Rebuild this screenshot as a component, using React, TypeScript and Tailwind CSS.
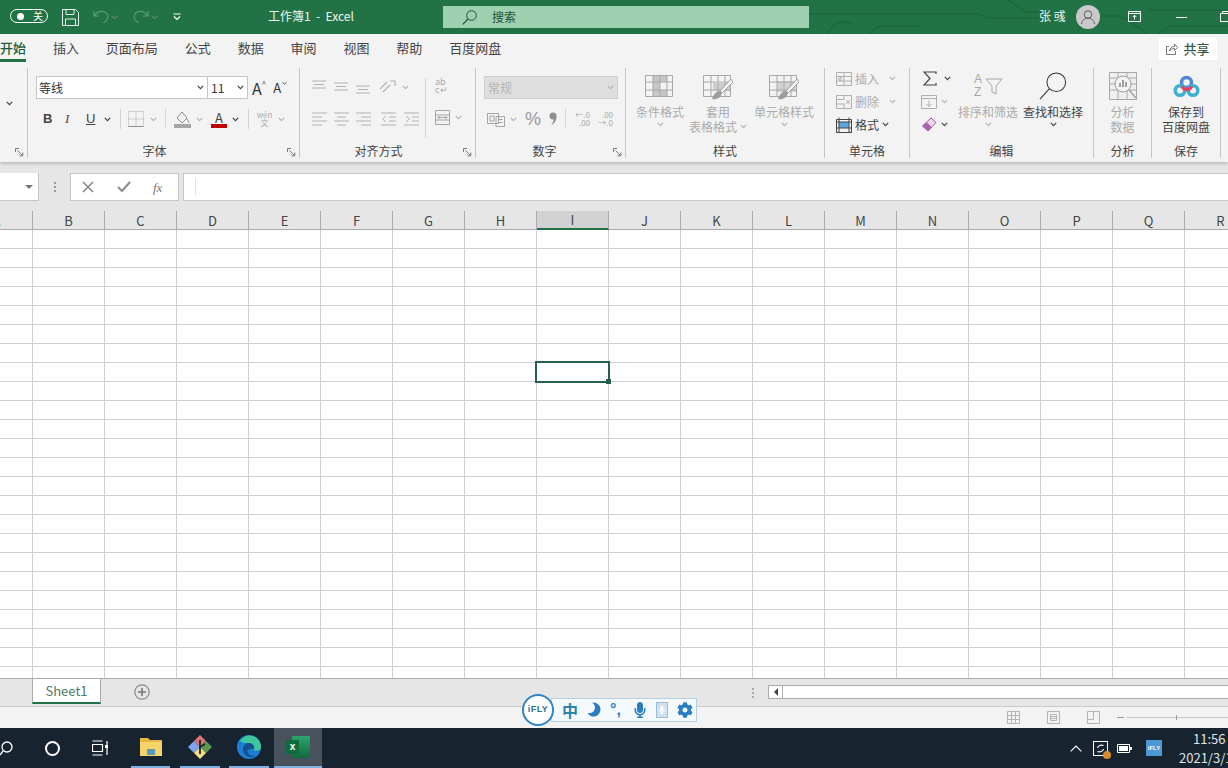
import type { ReactNode } from "react";
import { FaCog, FaMicrophone, FaMoon } from "react-icons/fa";

// ── Shared bits ────────────────────────────────────────

const COLS = ["A", "B", "C", "D", "E", "F", "G", "H", "I", "J", "K", "L", "M", "N", "O", "P", "Q", "R"];
const ROWS = Array.from({ length: 24 }, (_, i) => i);
const TABS = ["开始", "插入", "页面布局", "公式", "数据", "审阅", "视图", "帮助", "百度网盘"];

function Chev({ off, className = "" }: { off?: boolean; className?: string }) {
  return (
    <svg width="7" height="5" viewBox="0 0 7 5" className={`shrink-0 ${className}`}>
      <path d="M.8.8 3.500 3.600 6.200.8" fill="none" stroke={off ? "#b4b4b4" : "#444"} strokeWidth="1.200" />
    </svg>
  );
}

function Launcher({ className = "" }: { className?: string }) {
  return (
    <svg width="9" height="9" viewBox="0 0 9 9" className={className}>
      <path d="M.5 4V.5H4M2.500 2.500 7.500 7.500M7.800 4.500V7.800H4.500" fill="none" stroke="#777" strokeWidth="1" />
    </svg>
  );
}

function Lines({ kind, off = true }: { kind: number; off?: boolean }) {
  // 0-2 顶端/居中/底端，3-5 左/中/右
  const c = off ? "#b2b2b2" : "#555";
  const rows: Record<number, string> = {
    0: "M1 2h14M3 5.500h10M1 9h14",
    1: "M1 4h14M3 7.500h10M1 11h14",
    2: "M1 7h14M3 10.500h10M1 14h14",
    3: "M1 2h15M1 6h10M1 10h15M1 14h10",
    4: "M1 2h15M4 6h9M1 10h15M4 14h9",
    5: "M1 2h15M6 6h10M1 10h15M6 14h10",
  };
  return (
    <svg width="17" height="16" viewBox="0 0 17 16">
      <path d={rows[kind]} fill="none" stroke={c} strokeWidth="1" />
    </svg>
  );
}

function Group({
  width,
  label,
  launcher,
  pad,
  children,
}: {
  width: number;
  label?: string;
  launcher?: boolean;
  pad?: boolean;
  children: ReactNode;
}) {
  return (
    <div className="flex h-[90px] shrink-0 flex-col border-r border-[#c6c6c6]" style={{ width }}>
      <div className="h-[75px] shrink-0">{children}</div>
      <div className="flex h-[15px] items-center">
        <span className={`flex-1 text-center text-[12px] leading-none text-[#444] ${pad ? "pr-[6px]" : ""}`}>{label}</span>
        {launcher && <Launcher className="mr-[3px] mt-[4px]" />}
      </div>
    </div>
  );
}

function BigText({ lines, off, chev }: { lines: string[]; off?: boolean; chev?: boolean }) {
  return (
    <div className={`mt-[3px] flex flex-col items-center text-[12px] leading-[15px] ${off ? "text-[#ababab]" : "text-[#444]"}`}>
      {lines.map((l) => (
        <span key={l} className="whitespace-nowrap">{l}</span>
      ))}
      {chev && <Chev off={off} className="mt-[3px]" />}
    </div>
  );
}

// ── Title bar ──────────────────────────────────────────

function TitleBar() {
  return (
    <div className="relative flex h-[34px] shrink-0 items-center overflow-hidden bg-[#217346] text-white [&>*]:shrink-0">
      <svg width="420" height="34" viewBox="0 0 420 34" className="absolute left-[808px] top-0">
        <path
          d="M0 14h170l10 4h60M20 34c4-12 14-14 24-10M60 34l12-8h40M270 34c0-14 30-24 50-14l20 14M340 10h80M350 34l12-8h58M200 0l18 12h30"
          fill="none"
          stroke="#1c6a3e"
          strokeWidth="2"
        />
      </svg>
      <div className="relative mb-[2px] ml-[10px] flex h-[14px] w-[38px] items-center justify-between rounded-full border border-white pl-[6px] pr-[4px]">
        <span className="h-[7px] w-[7px] rounded-full bg-white" />
        <span className="text-[10px] leading-none">关</span>
      </div>
      <svg width="17" height="17" viewBox="0 0 17 17" className="relative ml-[14px]">
        <path d="M.5.500h13l3 3v13H.5zM4 .5v5h8v-5M3.500 16.500V10h10v6.500" fill="none" stroke="#e8f2ec" strokeWidth="1" />
      </svg>
      <svg width="16" height="14" viewBox="0 0 16 14" className="relative ml-[14px]">
        <path d="M1 1v5h5M1.500 6C4 1 12-1 14.500 5c1.200 3.500-1 6-4 8" fill="none" stroke="#5a9a77" strokeWidth="1.200" />
      </svg>
      <Chev off className="relative ml-[2px] opacity-40" />
      <svg width="16" height="14" viewBox="0 0 16 14" className="relative ml-[15px]">
        <path d="M15 1v5h-5M14.500 6C12 1 4-1 1.500 5c-1.200 3.500 1 6 4 8" fill="none" stroke="#5a9a77" strokeWidth="1.200" />
      </svg>
      <Chev off className="relative ml-[2px] opacity-40" />
      <svg width="8" height="8" viewBox="0 0 8 8" className="relative ml-[15px]">
        <path d="M.5 1h7M1 3.500 4 6.500 7 3.500" fill="none" stroke="#fff" strokeWidth="1.200" />
      </svg>
      <span className="relative mb-[3px] ml-[87px] w-[175px] whitespace-pre text-[12px] text-[#f1f7f3]">工作簿1  -  Excel</span>
      <div className="relative flex h-[22px] w-[366px] items-center bg-[#9fd0b0] pl-[19px] text-[12px] text-[#1f5236]">
        <svg width="15" height="15" viewBox="0 0 15 15">
          <circle cx="9.500" cy="5.500" r="4.800" fill="none" stroke="#1f5236" strokeWidth="1" />
          <path d="M6 9 .8 14.300" stroke="#1f5236" strokeWidth="1.200" />
        </svg>
        <span className="ml-[15px]">搜索</span>
      </div>
      <span className="relative mb-[3px] ml-[230px] whitespace-pre text-[12px] text-[#eef6f1]">张 彧</span>
      <div className="relative ml-[10px] flex h-[24px] w-[24px] items-center justify-center rounded-full bg-[#c9c9c9]">
        <svg width="16" height="16" viewBox="0 0 16 16">
          <circle cx="8" cy="5.500" r="3.800" fill="none" stroke="#5c5c5c" strokeWidth="1" />
          <path d="M1.500 15c.5-4 3-5.800 6.500-5.800s6 1.800 6.500 5.800" fill="none" stroke="#5c5c5c" strokeWidth="1" />
        </svg>
      </div>
      <svg width="13" height="11" viewBox="0 0 13 11" className="relative mb-[2px] ml-[28px]">
        <path d="M.5.500h12v10H.5zM.5 2.500h12M6.500 8.500V4.500M4.700 6 6.500 4.200 8.300 6" fill="none" stroke="#fff" strokeWidth="1" />
      </svg>
      <span className="relative ml-[35px] h-px w-[11px] bg-white" />
      <svg width="12" height="11" viewBox="0 0 12 11" className="relative mb-[2px] ml-[33px]">
        <path d="M.5 2.500h8v8h-8zM2.500 2.500v-2h8v8h-2" fill="none" stroke="#fff" strokeWidth="1" />
      </svg>
    </div>
  );
}

// ── Tabs ───────────────────────────────────────────────

function TabRow() {
  return (
    <div className="flex h-[28px] shrink-0 items-stretch bg-[#f3f3f3]">
      <div className="flex flex-1 gap-[26.900px] pt-[6px] text-[13px] leading-[16px] text-[#444]">
        {TABS.map((t, i) => (
          <div key={t} className={i === 0 ? "h-[22px] border-b-[3px] border-[#217346] font-medium text-[#1f5c3b]" : ""}>
            {t}
          </div>
        ))}
      </div>
      <div className="mr-[11px] mt-[4px] flex h-[22px] w-[58px] items-center justify-center gap-[5px] bg-white text-[13px] font-medium text-[#3d5a4a]">
        <svg width="12" height="12" viewBox="0 0 12 12">
          <path d="M3 3.500H.5v8h9V8M3.500 8c.3-3 2.500-4.500 5-4.500V1l3 3.500-3 3V5.500C6 5.500 4.500 6.500 3.500 8z" fill="none" stroke="#666" strokeWidth=".9" />
        </svg>
        共享
      </div>
    </div>
  );
}

// ── Ribbon groups ──────────────────────────────────────

function FontGroup() {
  return (
    <div className="pl-[8px] pt-[8px]">
      <div className="flex h-[23px] items-center text-[12px] text-[#333]">
        <div className="flex h-full w-[172px] items-center justify-between border border-[#c6c6c6] bg-white pl-[2px] pr-[3px]">
          等线
          <Chev />
        </div>
        <div className="flex h-full w-[40px] items-center justify-between border border-l-0 border-[#c6c6c6] bg-white pl-[3px] pr-[3px]">
          11
          <Chev />
        </div>
        <span className="ml-[4px] text-[16px] leading-none">A</span>
        <span className="mb-[8px] text-[8px] leading-none text-[#555]">^</span>
        <span className="ml-[7px] text-[13px] leading-none">A</span>
        <Chev className="mb-[9px] scale-75" />
      </div>
      <div className="mt-[10px] flex h-[20px] items-center text-[13px] text-[#444]">
        <span className="ml-[7px] w-[10px] font-['Liberation_Sans',sans-serif] font-bold">B</span>
        <span className="ml-[12px] w-[8px] font-['Liberation_Serif',serif] italic">I</span>
        <span className="ml-[13px] w-[10px] font-['Liberation_Sans',sans-serif] underline">U</span>
        <Chev className="ml-[8px]" />
        <span className="ml-[9px] mr-[7px] h-[20px] w-px bg-[#d4d4d4]" />
        <svg width="16" height="16" viewBox="0 0 16 16">
          <path d="M.5 15.500h15" stroke="#777" strokeWidth="1" />
          <path d="M.5.500h15v15H.5zM8 .5v15M.5 8h15" fill="none" stroke="#aaa" strokeWidth="1" strokeDasharray="1 1" />
        </svg>
        <Chev off className="ml-[6px]" />
        <span className="ml-[8px] mr-[8px] h-[20px] w-px bg-[#d4d4d4]" />
        <svg width="17" height="17" viewBox="0 0 17 17">
          <path d="M8 1 3 7l5 5 5-5zM13 8c1 2 2 3 2 4" fill="none" stroke="#8a8a8a" strokeWidth="1" />
          <rect x="0" y="13" width="17" height="4" fill="#a5a5a5" />
        </svg>
        <Chev off className="ml-[5px]" />
        <div className="ml-[8px] flex w-[16px] flex-col items-center text-[13px] leading-[13px]">
          A
          <span className="h-[4px] w-full bg-[#c00000]" />
        </div>
        <Chev className="ml-[5px]" />
        <span className="ml-[9px] mr-[7px] h-[20px] w-px bg-[#d4d4d4]" />
        <div className="flex w-[17px] flex-col items-center text-[8px] leading-[8px] text-[#aaa]">
          <span>wén</span>
          <span>文</span>
        </div>
        <Chev off className="ml-[5px]" />
      </div>
    </div>
  );
}

function AlignGroup() {
  return (
    <div className="flex pl-[11px] pt-[10px]">
      <div className="w-[114px]">
        <div className="flex h-[18px] items-center gap-[5px]">
          <Lines kind={0} />
          <Lines kind={1} />
          <Lines kind={2} />
          <svg width="18" height="16" viewBox="0 0 18 16" className="ml-[2px]">
            <path d="M1 10 8 3M4 13l7-7M11 2h5v5" fill="none" stroke="#b2b2b2" strokeWidth="1.200" />
          </svg>
          <Chev off />
        </div>
        <div className="mt-[14px] flex h-[18px] items-center gap-[5px]">
          <Lines kind={3} />
          <Lines kind={4} />
          <Lines kind={5} />
          <svg width="15" height="14" viewBox="0 0 15 14" className="ml-[4px]">
            <path d="M0 1h15M8 5h7M8 9h7M0 13h15M5 4 1.500 7 5 10" fill="none" stroke="#b2b2b2" />
          </svg>
          <svg width="15" height="14" viewBox="0 0 15 14" className="ml-[3px]">
            <path d="M0 1h15M8 5h7M8 9h7M0 13h15M2 4l3.500 3L2 10" fill="none" stroke="#b2b2b2" />
          </svg>
        </div>
      </div>
      <span className="h-[60px] w-px bg-[#d4d4d4]" />
      <div className="ml-[9px]">
        <div className="flex h-[18px] flex-col items-start text-[9px] leading-[8px] text-[#aaa]">
          <span>ab</span>
          <span>c↵</span>
        </div>
        <div className="mt-[14px] flex items-center gap-[5px]">
          <svg width="15" height="15" viewBox="0 0 15 15">
            <path d="M.5.500h14v14H.5zM.5 5h14M.5 10h14M3 7.500h9M4.500 6 3 7.500 4.500 9M10.500 6 12 7.500 10.500 9" fill="none" stroke="#a5a5a5" />
          </svg>
          <Chev off />
        </div>
      </div>
    </div>
  );
}

function NumberGroup() {
  return (
    <div className="pl-[8px] pt-[8px]">
      <div className="flex h-[23px] w-[134px] items-center justify-between border border-[#cfcfcf] bg-[#dedede] pl-[3px] pr-[3px] text-[12px] text-[#b4b4b4]">
        常规
        <Chev off />
      </div>
      <div className="mt-[10px] flex h-[20px] items-center text-[#a8a8a8]">
        <svg width="18" height="15" viewBox="0 0 18 15" className="ml-[3px]">
          <path d="M.5 1.500h11v10H.5zM9 4.500h8.500v10H9zM3 4h4v5H3zM11.500 7.500h4M11.500 10.500h4" fill="none" stroke="#a5a5a5" />
        </svg>
        <Chev off className="ml-[5px]" />
        <span className="ml-[8px] font-['Liberation_Sans',sans-serif] text-[18px] leading-none text-[#9a9a9a]">%</span>
        <svg width="8" height="14" viewBox="0 0 8 14" className="ml-[8px]">
          <circle cx="4" cy="4" r="3.500" fill="#8f8f8f" />
          <path d="M7.500 4C7.500 9 5 12 2 13.500 4 11 4.500 9 4.500 7z" fill="#8f8f8f" />
        </svg>
        <span className="ml-[8px] mr-[7px] h-[20px] w-px bg-[#d4d4d4]" />
        <div className="w-[17px] text-right text-[8px] leading-[8px]">
          ←.0
          <br />
          .00
        </div>
        <div className="ml-[6px] w-[17px] text-right text-[8px] leading-[8px]">
          .00
          <br />
          →.0
        </div>
      </div>
    </div>
  );
}

function StyleIcon({ kind }: { kind: number }) {
  return (
    <svg width="30" height="26" viewBox="0 0 30 26" className="shrink-0">
      {kind === 0 && <path d="M8 .5h14V7H15v8h7v7H8z" fill="#c6c6c6" />}
      {kind === 1 && <path d="M10 8h18v8H10z" fill="#cdcdcd" />}
      {kind === 2 && <path d="M8 6h20v11H8z" fill="#d2d2d2" />}
      <path d="M.5.500h27v21H.5zM.5 7h27M.5 15h27M8 .5v21M15 .5v21M22 .5v21" fill="none" stroke="#a8a8a8" strokeWidth="1" />
      {kind !== 0 && (
        <>
          <path d="M28 4 17 16l2 2L30 7z" fill="#f3f3f3" stroke="#a0a0a0" strokeWidth="1" />
          <path d="M17 16c-4 0-6 3-8 8 4 1 9-1 10-6z" fill="#9c9c9c" />
        </>
      )}
    </svg>
  );
}

function StylesGroup() {
  return (
    <div className="flex pl-[10px] pt-[7px]">
      <div className="flex w-[48px] flex-col items-center">
        <StyleIcon kind={0} />
        <BigText lines={["条件格式"]} off chev />
      </div>
      <div className="ml-[4px] flex w-[60px] flex-col items-center">
        <StyleIcon kind={1} />
        <div className="mt-[3px] flex flex-col items-center text-[12px] leading-[15px] text-[#ababab]">
          <span>套用</span>
          <span className="flex items-center gap-[3px] whitespace-nowrap">
            表格格式
            <Chev off />
          </span>
        </div>
      </div>
      <div className="ml-[6px] flex w-[60px] flex-col items-center">
        <StyleIcon kind={2} />
        <BigText lines={["单元格样式"]} off chev />
      </div>
    </div>
  );
}

function CellRow({ children, text, off }: { children: ReactNode; text: string; off?: boolean }) {
  return (
    <div className={`flex h-[23px] items-center text-[12px] ${off ? "text-[#ababab]" : "text-[#444]"}`}>
      {children}
      <span className="ml-[3px]">{text}</span>
      <Chev off={off} className={off ? "ml-[10px]" : "ml-[3px]"} />
    </div>
  );
}

function CellsGroup() {
  return (
    <div className="mt-[-1px] pl-[11px]">
      <CellRow text="插入" off>
        <svg width="16" height="14" viewBox="0 0 16 14">
          <path d="M.5.500h15v13H.5zM8 .5v13M.5 4.500h15M.5 9h15M2 7l3-2v4z" fill="none" stroke="#b0b0b0" />
        </svg>
      </CellRow>
      <CellRow text="删除" off>
        <svg width="16" height="14" viewBox="0 0 16 14">
          <path d="M.5.500h15v13H.5zM.5 4.500h8M.5 9h8M8 .5v4M8 9v4.500M10 5l4 4M14 5l-4 4" fill="none" stroke="#b0b0b0" />
        </svg>
      </CellRow>
      <CellRow text="格式">
        <svg width="16" height="16" viewBox="0 0 16 16">
          <rect x="3" y="5" width="10" height="6" fill="#5aa7e0" />
          <path d="M.5 2.500h15v13H.5zM.5 5h15M.5 11h15M3 .5v15M13 .5v15" fill="none" stroke="#444" />
        </svg>
      </CellRow>
    </div>
  );
}

function EditGroup() {
  return (
    <div className="mt-[-1px] flex pl-[11px]">
      <div className="w-[36px]">
        <div className="flex h-[23px] items-center gap-[7px] pl-[2px]">
          <svg width="14" height="15" viewBox="0 0 14 15">
            <path d="M13 3V1H1l6 6.500L1 14h12v-2" fill="none" stroke="#444" strokeWidth="1.200" />
          </svg>
          <Chev />
        </div>
        <div className="flex h-[23px] items-center gap-[4px]">
          <svg width="16" height="14" viewBox="0 0 16 14">
            <path d="M.5.500h15v13H.5zM.5 3.500h15M8 5.500v6M5.500 9 8 11.500 10.500 9" fill="none" stroke="#b0b0b0" />
          </svg>
          <Chev off />
        </div>
        <div className="flex h-[23px] items-center gap-[4px]">
          <svg width="16" height="15" viewBox="0 0 16 15">
            <path d="M10 1 15 5.500 7 14 1.500 9z" fill="#f1d6f1" stroke="#9b5aa0" strokeWidth="1" />
            <path d="M5.500 5 11 10.500 7 14 1.500 9z" fill="#a566aa" />
          </svg>
          <Chev />
        </div>
      </div>
      <div className="ml-[1px] flex w-[60px] flex-col items-center">
        <svg width="30" height="25" viewBox="0 0 30 25" className="mt-[5px] shrink-0">
          <text x="1" y="11" fontSize="12" fill="#a8a8a8" fontFamily="Liberation Sans">A</text>
          <text x="1" y="24" fontSize="12" fill="#a8a8a8" fontFamily="Liberation Sans">Z</text>
          <path d="M13 7h16l-6 7v8l-4-2v-6z" fill="none" stroke="#a8a8a8" />
        </svg>
        <div className="mt-[4px]">
          <BigText lines={["排序和筛选"]} off chev />
        </div>
      </div>
      <div className="ml-[5px] flex w-[60px] flex-col items-center">
        <svg width="28" height="28" viewBox="0 0 30 30" className="mt-[5px] shrink-0">
          <circle cx="18.500" cy="11" r="10" fill="none" stroke="#333" strokeWidth="1.100" />
          <path d="M11 18 1 29" stroke="#333" strokeWidth="1.100" />
        </svg>
        <div className="mt-[1px]">
          <BigText lines={["查找和选择"]} chev />
        </div>
      </div>
    </div>
  );
}

function AnalysisGroup() {
  return (
    <div className="flex flex-col items-center pt-[4px]">
      <svg width="28" height="28" viewBox="0 0 28 28" className="shrink-0">
        <path d="M.5.500h27v27H.5zM.5 6h27M.5 12h27M.5 18h27M9 .5v27M18 .5v27" fill="#efefef" stroke="#a8a8a8" />
        <circle cx="14" cy="12" r="8" fill="#f3f3f3" stroke="#a0a0a0" />
        <path d="M11 15v-4M14 15V8M17 15v-5" stroke="#a0a0a0" strokeWidth="2" />
        <path d="M20 18l7 8" stroke="#a0a0a0" strokeWidth="1.500" />
      </svg>
      <div className="mt-[1px]">
        <BigText lines={["分析", "数据"]} off />
      </div>
    </div>
  );
}

function SaveGroup() {
  return (
    <div className="flex flex-col items-center pt-[7px]">
      <svg width="27" height="24" viewBox="0 0 27 24" className="shrink-0">
        <circle cx="13.500" cy="7.500" r="5" fill="none" stroke="#4f86d6" strokeWidth="3.500" />
        <circle cx="7" cy="15.500" r="4.800" fill="none" stroke="#3fb0cf" strokeWidth="3.500" />
        <circle cx="20" cy="15.500" r="4.800" fill="none" stroke="#3fb0cf" strokeWidth="3.500" />
        <path d="M9 11.500c2 3.500 7 4.500 9.500 0" fill="none" stroke="#e0435f" strokeWidth="3.500" />
      </svg>
      <div className="mt-[2px]">
        <BigText lines={["保存到", "百度网盘"]} />
      </div>
    </div>
  );
}

function Ribbon() {
  return (
    <div className="relative z-10 flex h-[100px] shrink-0 bg-[#f3f3f3] pt-[6px] shadow-[0_2px_3px_rgba(0,0,0,0.18)]">
      <Group width={28} launcher>
        <div className="pl-[6px] pt-[33px]">
          <Chev />
        </div>
      </Group>
      <Group width={272} label="字体" launcher pad>
        <FontGroup />
      </Group>
      <Group width={176} label="对齐方式" launcher pad>
        <AlignGroup />
      </Group>
      <Group width={150} label="数字" launcher>
        <NumberGroup />
      </Group>
      <Group width={199} label="样式">
        <StylesGroup />
      </Group>
      <Group width={85} label="单元格">
        <CellsGroup />
      </Group>
      <Group width={184} label="编辑">
        <EditGroup />
      </Group>
      <Group width={58} label="分析">
        <AnalysisGroup />
      </Group>
      <Group width={69} label="保存">
        <SaveGroup />
      </Group>
    </div>
  );
}

// ── Formula bar + sheet ────────────────────────────────

function FormulaBar() {
  return (
    <div className="flex h-[49px] shrink-0 items-start bg-[#e6e6e6] pt-[11px]">
      <div className="flex h-[28px] w-[39px] items-center justify-end border-b border-r border-[#c6c6c6] bg-white pr-[5px]">
        <span className="h-0 w-0 border-x-[4px] border-t-[4px] border-x-transparent border-t-[#777]" />
      </div>
      <div className="ml-[14px] flex h-[28px] w-[3px] flex-col items-center justify-center gap-[2px]">
        <span className="h-[2px] w-[2px] bg-[#999]" />
        <span className="h-[2px] w-[2px] bg-[#999]" />
        <span className="h-[2px] w-[2px] bg-[#999]" />
      </div>
      <div className="ml-[14px] flex h-[28px] w-[109px] items-center border border-[#c6c6c6] bg-white pl-[11px]">
        <svg width="12" height="12" viewBox="0 0 12 12">
          <path d="M1 1l10 10M11 1 1 11" stroke="#8a8a8a" strokeWidth="1.600" />
        </svg>
        <svg width="14" height="12" viewBox="0 0 14 12" className="ml-[23px]">
          <path d="M1 6l4 4 8-9" fill="none" stroke="#8a8a8a" strokeWidth="2" />
        </svg>
        <span className="ml-[22px] font-['Liberation_Serif',serif] text-[13px] italic leading-none text-[#777]">fx</span>
      </div>
      <div className="ml-[4px] flex h-[28px] flex-1 items-center border border-r-0 border-[#c6c6c6] bg-white pl-[11px]">
        <span className="h-[18px] w-px bg-[#e2e2e2]" />
      </div>
    </div>
  );
}

function SheetGrid() {
  return (
    <div className="min-h-0 flex-1 overflow-hidden">
      <div className="ml-[-39px] flex h-[19px] w-max bg-[#e6e6e6]">
        {COLS.map((c) => (
          <div
            key={c}
            className={`flex h-[19px] w-[72px] items-center justify-center border-b border-r border-[#ababab] text-[13px] leading-none text-[#444] ${
              c === "I" ? "border-b-2 border-b-[#217346] bg-[#d2d2d2]" : ""
            }`}
          >
            {c}
          </div>
        ))}
      </div>
      <div className="ml-[-39px] w-max bg-white">
        {ROWS.map((r) => (
          <div key={r} className="flex">
            {COLS.map((c) => (
              <div key={c} className="relative h-[19px] w-[72px] border-b border-r border-[#d0d0d0]">
                {r === 7 && c === "I" && (
                  <div className="absolute left-[-2px] top-[-2px] z-10 h-[22px] w-[75px] border-2 border-[#27604a]">
                    <span className="absolute bottom-[-3px] right-[-3px] h-[5px] w-[5px] bg-[#27604a]" />
                  </div>
                )}
              </div>
            ))}
          </div>
        ))}
      </div>
    </div>
  );
}

function SheetBar() {
  return (
    <div className="flex h-[29px] shrink-0 items-start border-y border-[#ababab] border-b-[#c9c9c9] bg-[#e6e6e6]">
      <div className="ml-[32px] flex h-[25px] w-[69px] items-center justify-center border-x border-b-2 border-x-[#ababab] border-b-[#217346] bg-white text-[13px] text-[#4d7a62]">
        Sheet1
      </div>
      <svg width="16" height="16" viewBox="0 0 16 16" className="ml-[33px] mt-[5px]">
        <circle cx="8" cy="8" r="7.200" fill="none" stroke="#8a8a8a" strokeWidth="1.200" />
        <path d="M8 4v8M4 8h8" stroke="#777" strokeWidth="1.600" />
      </svg>
      <div className="ml-[602px] mt-[9px] flex h-[10px] w-[3px] flex-col justify-between">
        <span className="h-[2px] w-[2px] bg-[#aaa]" />
        <span className="h-[2px] w-[2px] bg-[#aaa]" />
        <span className="h-[2px] w-[2px] bg-[#aaa]" />
      </div>
      <div className="ml-[13px] mt-[6px] flex h-[14px] flex-1 border border-r-0 border-[#ababab] bg-white">
        <div className="flex w-[14px] items-center justify-center border-r border-[#ababab]">
          <span className="h-0 w-0 border-y-[4px] border-r-[4px] border-y-transparent border-r-[#444]" />
        </div>
      </div>
    </div>
  );
}

function StatusBar() {
  return (
    <div className="flex h-[21px] shrink-0 items-center bg-[#f3f3f3] pl-[1007px]">
      <svg width="13" height="13" viewBox="0 0 13 13">
        <path d="M.5.500h12v12H.5zM4.500.5v12M8.500.5v12M.5 4.500h12M.5 8.500h12" fill="none" stroke="#b4b4b4" />
      </svg>
      <svg width="13" height="13" viewBox="0 0 13 13" className="ml-[27px]">
        <path d="M.5.500h12v12H.5zM3.500 3.500h6v6h-6zM3.500 5.500h6M3.500 7.500h6" fill="none" stroke="#b4b4b4" />
      </svg>
      <svg width="13" height="13" viewBox="0 0 13 13" className="ml-[27px]">
        <path d="M.5.500h12v12H.5zM.5 8.500h6M6.500.5v8" fill="none" stroke="#b4b4b4" />
      </svg>
      <span className="ml-[17px] h-px w-[7px] bg-[#999]" />
      <div className="relative ml-[3px] h-px flex-1 bg-[#c6c6c6]">
        <span className="absolute left-[49px] top-[-2px] h-[5px] w-px bg-[#999]" />
      </div>
    </div>
  );
}

// ── iFly floating bar ──────────────────────────────────

function IflyBar() {
  return (
    <div className="absolute left-[522px] top-[694px] z-20 flex items-center">
      <div className="relative z-10 flex h-[32px] w-[32px] items-center justify-center rounded-full border-2 border-[#2f84c6] bg-white font-['Liberation_Sans',sans-serif] text-[9px] font-bold tracking-[0.5px] text-[#2f6f9f]">
        iFLY
      </div>
      <div className="ml-[-3px] flex h-[24px] w-[146px] items-center border border-[#b7cfe3] bg-[#f4f9fd] pl-[10px] text-[#2a7cc4]">
        <span className="w-[18px] text-[16px] font-bold leading-none text-[#2c84a8]">中</span>
        <FaMoon size={14} className="ml-[7px] rotate-[225deg]" />
        <span className="ml-[9px] w-[14px] font-['Liberation_Sans',sans-serif] text-[16px] font-bold leading-none">°,</span>
        <FaMicrophone size={16} className="ml-[8px]" />
        <span className="ml-[8px] flex h-[16px] w-[12px] items-center justify-center border border-[#9dbdd6] bg-[#cfe0ee]">
          <FaMicrophone size={8} className="text-white" />
        </span>
        <FaCog size={16} className="ml-[9px]" />
      </div>
    </div>
  );
}

// ── Taskbar ────────────────────────────────────────────

function TaskApp({ width, active, children }: { width: number; active?: boolean; children: ReactNode }) {
  return (
    <div
      className={`flex h-[40px] shrink-0 items-center justify-center border-b-2 border-[#7fb2e2] ${active ? "bg-[#47525c]" : ""}`}
      style={{ width }}
    >
      {children}
    </div>
  );
}

function Taskbar() {
  return (
    <div className="flex h-[40px] shrink-0 items-center overflow-hidden bg-[#17242f] text-white [&>*]:shrink-0">
      <svg width="13" height="15" viewBox="0 0 13 15">
        <circle cx="7" cy="6" r="5" fill="none" stroke="#fff" strokeWidth="1.300" />
        <path d="M3 10 0 14" stroke="#fff" strokeWidth="1.300" />
      </svg>
      <span className="ml-[32px] h-[15px] w-[15px] rounded-full border-2 border-white" />
      <svg width="16" height="16" viewBox="0 0 16 16" className="ml-[32px]">
        <path d="M.5 1h10M.5 15h10M.5 4.500h10v7H.5zM15 1v14" fill="none" stroke="#fff" strokeWidth="1.200" />
        <rect x="13" y="5" width="3" height="3" fill="#fff" />
      </svg>
      <div className="ml-[23px] flex items-center">
        <TaskApp width={39}>
          <svg width="22" height="20" viewBox="0 0 22 20">
            <path d="M0 1h8l2 2h12v16H0z" fill="#e8b83e" />
            <path d="M0 5h22v14H0z" fill="#f7d36b" />
            <rect x="7" y="12" width="8" height="6" fill="#5c9bb8" />
          </svg>
        </TaskApp>
        <span className="w-[10px]" />
        <TaskApp width={40}>
          <svg width="26" height="26" viewBox="0 0 26 26">
            <path d="M13 1l6 6-6 6-6-6z" fill="#d6747a" />
            <path d="M1 13l6-6 6 6-6 6z" fill="#7da4e8" />
            <path d="M25 13l-6-6-6 6 6 6z" fill="#5a9a50" />
            <path d="M13 25l6-6-6-6-6 6z" fill="#f0dd85" />
            <path d="M13 6v14M13 13l5-3" stroke="#222" strokeWidth="1.800" />
          </svg>
        </TaskApp>
        <span className="w-[9px]" />
        <TaskApp width={40}>
          <svg width="24" height="24" viewBox="0 0 24 24">
            <circle cx="12" cy="12" r="12" fill="#1a7fd4" />
            <path d="M3 6C6 1 12-1 17 1.500c4.500 2 7 6 7 10.500 0 3-3 4.500-7 3.500 1-4-1-7-5-7.500C8 8 5 8 3 6z" fill="#3ec79b" />
            <path d="M11 8c-3 .5-5 3-5 6.500 0 4 3.500 7.500 8 7.500 2 0 4-.7 5.500-2-4 1.500-8 .5-9-3-.5-2 .5-3 3-3l3.500-.5C18 11 15 7.500 11 8z" fill="#14508f" />
          </svg>
        </TaskApp>
        <span className="w-[5px]" />
        <TaskApp width={48} active>
          <div className="relative h-[22px] w-[24px]">
            <div className="absolute right-0 top-0 h-[22px] w-[18px] rounded-[1px] bg-gradient-to-b from-[#2fa56e] to-[#116a3d]" />
            <div className="absolute left-0 top-[4px] flex h-[14px] w-[13px] items-center justify-center bg-[#0f6b3c] font-['Liberation_Sans',sans-serif] text-[10px] font-bold leading-none text-white">
              x
            </div>
          </div>
        </TaskApp>
      </div>
      <svg width="12" height="7" viewBox="0 0 12 7" className="ml-[748px]">
        <path d="M.7 6.300 6 1l5.300 5.300" fill="none" stroke="#fff" strokeWidth="1.100" />
      </svg>
      <div className="relative ml-[11px] flex h-[15px] w-[15px] items-center justify-center border border-white">
        <svg width="9" height="9" viewBox="0 0 9 9">
          <path d="M7.500 1.500C5 .5 2 1.500 1.500 4M1.500 7.500C4 8.500 7 7.500 7.500 5" fill="none" stroke="#fff" strokeWidth="1.200" />
        </svg>
        <span className="absolute bottom-[-4px] right-[-4px] h-[8px] w-[8px] rounded-full bg-[#d98a2b]" />
      </div>
      <svg width="15" height="9" viewBox="0 0 15 9" className="ml-[9px]">
        <path d="M.5.500h12v8H.5z" fill="none" stroke="#fff" />
        <rect x="2" y="2" width="9" height="5" fill="#fff" />
        <rect x="13" y="3" width="2" height="3" fill="#fff" />
      </svg>
      <div className="ml-[14px] flex h-[16px] w-[16px] items-center justify-center bg-[#4c97d4] font-['Liberation_Sans',sans-serif] text-[6px] font-bold">
        iFLY
      </div>
      <div className="ml-[17px] w-[60px] whitespace-nowrap text-[13px] leading-[19px] text-[#dfe3e6]">
        <div className="pl-[14px]">11:56</div>
        <div>2021/3/1</div>
      </div>
    </div>
  );
}

// ── Main ───────────────────────────────────────────────

export default function App() {
  return (
    <div className="relative flex h-[768px] w-[1228px] flex-col overflow-hidden bg-white font-['Noto_Sans_CJK_SC','Liberation_Sans',sans-serif]">
      <TitleBar />
      <TabRow />
      <Ribbon />
      <FormulaBar />
      <SheetGrid />
      <SheetBar />
      <StatusBar />
      <Taskbar />
      <IflyBar />
    </div>
  );
}
